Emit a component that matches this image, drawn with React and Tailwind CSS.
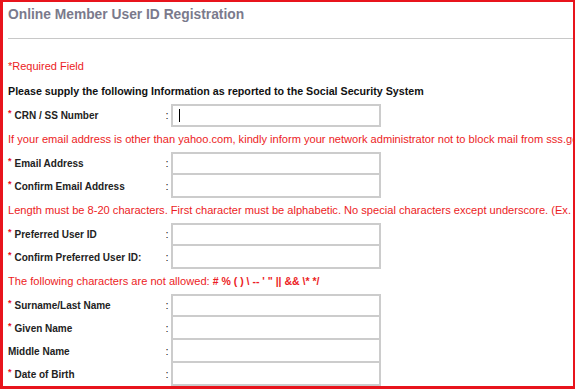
const Asterisk = () => <span className="relative -top-[3px] mr-[3px] text-[9px] text-[#e8141c]">*</span>;

const Field = ({ label, required, joined, caret }) => (
    <div className="flex h-[23px] items-center">
        <div className="w-[155px] text-[10px] font-bold text-[#222]">
            {required ? <Asterisk /> : null}
            {label}
        </div>
        <div className="w-[8px] text-center text-[11px] text-[#222]">:</div>
        <div
            className={
                joined
                    ? 'relative h-[23px] w-[210px] border-2 border-t-0 border-[#cccccc] bg-white'
                    : 'relative h-[23px] w-[210px] border-2 border-[#cccccc] bg-white'
            }
        >
            {caret ? <span className="absolute left-[6px] top-[3px] h-[13px] w-px bg-black" /> : null}
        </div>
    </div>
);

const Note = ({ children }) => (
    <div className="flex h-[25px] items-center whitespace-nowrap text-[11.1px] text-[#ec1c24]">{children}</div>
);

export default function App() {
    return (
        <div
            className="h-[389px] w-[576px] overflow-hidden bg-white"
            style={{ fontFamily: '"Liberation Sans", Arial, sans-serif' }}
        >
            <div className="h-[389px] w-[575px] overflow-hidden border-t-2 border-r-2 border-b-[3px] border-l-[3px] border-[#e8141c]">
                <div className="pl-[5px] pt-[3px]">
                    <h1 className="h-[20px] text-[13.8px] font-bold leading-[20px] text-[#7a7a8c]">
                        Online Member User ID Registration
                    </h1>
                    <div className="mt-[13px] h-px bg-[#c8c8c8]" />
                    <div className="mt-[15px] flex h-[25px] items-center text-[11px] text-[#ec1c24]">*Required Field</div>
                    <div className="flex h-[25px] items-center text-[10.7px] font-bold text-[#111]">
                        Please supply the following Information as reported to the Social Security System
                    </div>
                    <Field label="CRN / SS Number" required caret />
                    <Note>
                        If your email address is other than yahoo.com, kindly inform your network administrator not to
                        block mail from sss.gov.ph
                    </Note>
                    <Field label="Email Address" required />
                    <Field label="Confirm Email Address" required joined />
                    <Note>
                        Length must be 8-20 characters. First character must be alphabetic. No special characters except
                        underscore. (Ex. juan_delacruz)
                    </Note>
                    <Field label="Preferred User ID" required />
                    <Field label="Confirm Preferred User ID:" required joined />
                    <Note>
                        The following characters are not allowed:&nbsp;
                        <span className="text-[10.5px] font-bold">{'# % ( ) \\ -- \' " || && \\* */'}</span>
                    </Note>
                    <Field label="Surname/Last Name" required />
                    <Field label="Given Name" required joined />
                    <Field label="Middle Name" joined />
                    <Field label="Date of Birth" required joined />
                </div>
            </div>
        </div>
    );
}
